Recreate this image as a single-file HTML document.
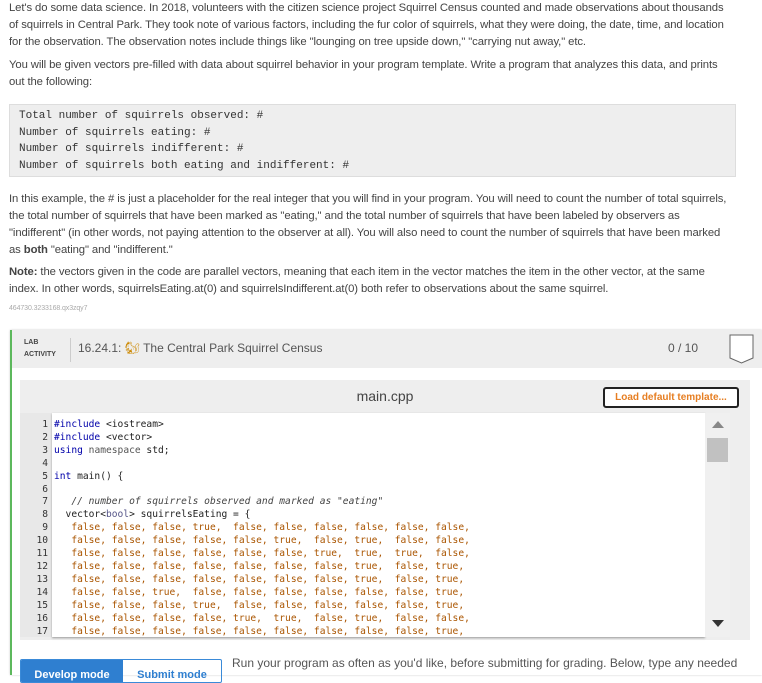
<!DOCTYPE html>
<html><head><style>
body{margin:0;width:762px;height:675px;overflow:hidden;background:#fff;font-family:"Liberation Sans",sans-serif;color:#444;font-size:11.3px}
p{margin:0;position:absolute;left:9px;width:724px;line-height:17px;letter-spacing:-0.1px}
.box{position:absolute;left:9px;top:104px;width:727px;height:73px;background:#eee;border:1px solid #ddd;font-family:"Liberation Mono",monospace;font-size:11px;color:#333;padding:3px 0 0 9px;line-height:16.7px;box-sizing:border-box}
.lab{position:absolute;left:10px;top:330px;width:750px;height:345px;background:#fff;border-left:2px solid #5cb85c;box-shadow:0 0 2px #ccc}
.hdr{height:38px;background:#eee;position:relative}
.code{font-family:"DejaVu Sans Mono",monospace;font-size:9.6px;line-height:12.9px;white-space:pre}
</style></head><body>
<p style="top:0">Let's do some data science. In 2018, volunteers with the citizen science project Squirrel Census counted and made observations about thousands of squirrels in Central Park. They took note of various factors, including the fur color of squirrels, what they were doing, the date, time, and location for the observation. The observation notes include things like "lounging on tree upside down," "carrying nut away," etc.</p>
<p style="top:57px">You will be given vectors pre-filled with data about squirrel behavior in your program template. Write a program that analyzes this data, and prints out the following:</p>
<div class="box">Total number of squirrels observed: #<br>Number of squirrels eating: #<br>Number of squirrels indifferent: #<br>Number of squirrels both eating and indifferent: #</div>
<p style="top:191px">In this example, the # is just a placeholder for the real integer that you will find in your program. You will need to count the number of total squirrels, the total number of squirrels that have been marked as "eating," and the total number of squirrels that have been labeled by observers as "indifferent" (in other words, not paying attention to the observer at all). You will also need to count the number of squirrels that have been marked as <b>both</b> "eating" and "indifferent."</p>
<p style="top:264px"><b>Note:</b> the vectors given in the code are parallel vectors, meaning that each item in the vector matches the item in the other vector, at the same index. In other words, squirrelsEating.at(0) and squirrelsIndifferent.at(0) both refer to observations about the same squirrel.</p>
<p style="top:300px;font-size:7px;color:#aaa">464730.3233168.qx3zqy7</p>
<div class="lab">
 <div class="hdr">
  <div style="position:absolute;left:12px;top:7px;font-size:7px;font-weight:bold;line-height:12px;color:#444">LAB<br>ACTIVITY</div>
  <div style="position:absolute;left:58px;top:8px;width:1px;height:24px;background:#ccc"></div>
  <div style="position:absolute;left:66px;top:11px;font-size:12px;color:#555">16.24.1: <span style="color:#c80">🐿</span> The Central Park Squirrel Census</div>
  <div style="position:absolute;left:656px;top:11px;font-size:12px;color:#555">0 / 10</div>
  <svg style="position:absolute;left:717px;top:4px" width="26" height="30"><path d="M1 1H24V24L12.5 29L1 24Z" fill="#fff" stroke="#666"/></svg>
 </div>
 <div style="position:absolute;left:8px;top:50px;width:730px;height:260px;background:#eee">
  <div style="position:absolute;left:0;width:730px;top:8px;text-align:center;font-size:14px;color:#444">main.cpp</div>
  <div style="position:absolute;left:583px;top:7px;width:132px;height:17px;border:2px solid #222;border-radius:3px;background:#fff;color:#e67e22;font-size:10px;font-weight:bold;text-align:center;line-height:17px">Load default template...</div>
  <div style="position:absolute;left:0;top:33px;width:32px;height:224px;background:#e8e8e8"></div>
  <div class="code" style="position:absolute;left:0;top:39px;width:28px;text-align:right;color:#333">1
2
3
4
5
6
7
8
9
10
11
12
13
14
15
16
17</div>
  <div style="position:absolute;left:32px;top:33px;width:653px;height:224px;background:#fff;box-shadow:0 1px 2px #999"></div>
  <div class="code" style="position:absolute;left:34px;top:39px;color:#222"><span style="color:#00a">#include</span> &lt;iostream&gt;
<span style="color:#00a">#include</span> &lt;vector&gt;
<span style="color:#00a">using</span> <span style="color:#555">namespace</span> std;

<span style="color:#00a">int</span> main() {

   <i style="color:#444">// number of squirrels observed and marked as "eating"</i>
  vector&lt;<span style="color:#558">bool</span>&gt; squirrelsEating = {
<span style="color:#a50">   false, false, false, true,  false, false, false, false, false, false,
   false, false, false, false, false, true,  false, true,  false, false,
   false, false, false, false, false, false, true,  true,  true,  false,
   false, false, false, false, false, false, false, true,  false, true,
   false, false, false, false, false, false, false, true,  false, true,
   false, false, true,  false, false, false, false, false, false, true,
   false, false, false, true,  false, false, false, false, false, true,
   false, false, false, false, true,  true,  false, true,  false, false,
   false, false, false, false, false, false, false, false, false, true,</span></div>
  <div style="position:absolute;left:685px;top:33px;width:25px;height:224px;background:#f0f0f0"></div>
  <div style="position:absolute;left:692px;top:41px;border:6px solid transparent;border-bottom:7px solid #888;border-top:0"></div>
  <div style="position:absolute;left:687px;top:58px;width:21px;height:24px;background:#c1c1c1"></div>
  <div style="position:absolute;left:692px;top:240px;border:6px solid transparent;border-top:7px solid #333;border-bottom:0"></div>
 </div>
 <div style="position:absolute;left:8px;top:329px;width:200px;height:22px;border:1px solid #3a8ad8;border-radius:2px;overflow:hidden;font-size:11px;font-weight:bold"><div style="position:absolute;left:0;top:0;width:102px;height:22px;background:#2f7fd0;color:#fff;text-align:center;line-height:30px">Develop mode</div><div style="position:absolute;left:102px;width:98px;top:0;color:#2f7fd0;text-align:center;line-height:30px">Submit mode</div></div>
 <div style="position:absolute;left:220px;top:326px;font-size:12px;color:#555">Run your program as often as you'd like, before submitting for grading. Below, type any needed</div>
</div>
</body></html>
